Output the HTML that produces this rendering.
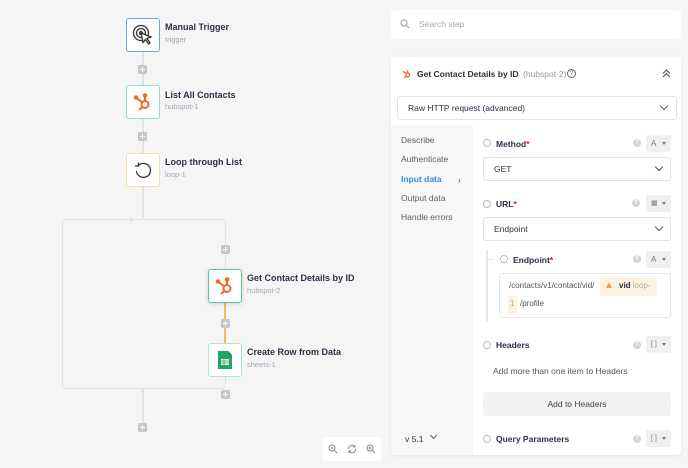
<!DOCTYPE html>
<html><head><style>
*{box-sizing:border-box;margin:0;padding:0}
body{width:688px;height:468px;background:#f5f5f5;font-family:"Liberation Sans",sans-serif;position:relative;overflow:hidden;color:#2d2f45}
.a{position:absolute}
.node{position:absolute;width:34px;height:34px;background:#fff;border:1.5px solid;border-radius:3px;display:flex;align-items:center;justify-content:center}
.t{position:absolute;font-size:9px;font-weight:bold;color:#2d2f45}
.s{position:absolute;font-size:7.5px;color:#a4a6b3}
.plus{position:absolute;width:9px;height:9px;background:#c4c6cf;border-radius:1.5px}
.plus:before{content:"";position:absolute;left:4px;top:2px;width:1px;height:5px;background:#fff}
.plus:after{content:"";position:absolute;left:2px;top:4px;width:5px;height:1px;background:#fff}
.ln{position:absolute;background:#e2e2e4}
.nav{position:absolute;left:401px;font-size:8.5px;color:#5a5c6b}
.lbl{position:absolute;font-size:8.5px;font-weight:bold;color:#2d2f45}
.radio{position:absolute;width:8px;height:8px;border:1px solid #b9bac2;border-radius:50%;background:#fff}
.q{position:absolute;width:8px;height:8px;border-radius:50%;background:#d4d5da;color:#fff;font-size:6px;text-align:center;line-height:8px;font-weight:bold}
.tb{position:absolute;width:25px;height:17px;background:#f0f0f2;border-radius:2px;font-size:8px;color:#777;padding-left:5px;line-height:17px}
.tb:after{content:"";position:absolute;right:5px;top:7px;border:2.5px solid transparent;border-top:3px solid #777}
.sel{position:absolute;background:#fff;border:1px solid #e3e3e7;border-radius:3px;font-size:8.5px;color:#2d2f45;padding-left:10px}
.chev{position:absolute;width:6px;height:6px;border-right:1.3px solid #555;border-bottom:1.3px solid #555;transform:rotate(45deg)}
</style></head><body>
<div class="ln" style="left:142px;top:52px;width:1.5px;height:166px"></div>
<div class="a" style="left:62px;top:219px;width:164px;height:170px;border:1.5px solid #e2e2e4;border-radius:4px"></div>
<div class="a" style="left:130px;top:217px;border:3px solid transparent;border-left:5px solid #e2e2e4"></div>
<div class="ln" style="left:142px;top:388px;width:1.5px;height:40px"></div>
<div class="a" style="left:224px;top:303px;width:2px;height:40px;background:#f6b95a"></div>

<div class="node" style="left:126px;top:18px;border-color:#6ea1e8">
<svg width="22" height="22" viewBox="0 0 22 22" fill="none" stroke="#333" stroke-width="1.3"><circle cx="9" cy="9" r="7.5"/><circle cx="9" cy="9" r="4.5"/><circle cx="9" cy="9" r="1.5"/><path d="M9 9 L19 13 L15 14.5 L18 19 L16.5 20 L13.5 15.5 L11 18.5 Z" fill="#fff"/></svg></div>
<div class="t" style="left:165px;top:22px">Manual Trigger</div><div class="s" style="left:165px;top:35px">trigger</div>
<div class="plus" style="left:138px;top:65px"></div>

<div class="node" style="left:126px;top:85px;border-color:#8ee0c2">
<svg width="20" height="20" viewBox="0 0 20 20" fill="none" stroke="#f2682c" stroke-width="2"><circle cx="12" cy="12.5" r="3.5"/><path d="M12 9V4M9.5 10.5L3.5 6M9.5 15L6 18"/><circle cx="12" cy="3.5" r="1.3" fill="#f2682c"/><circle cx="3" cy="5.5" r="1.3" fill="#f2682c"/></svg></div>
<div class="t" style="left:165px;top:90px">List All Contacts</div><div class="s" style="left:165px;top:102px">hubspot-1</div>
<div class="plus" style="left:138px;top:132px"></div>

<div class="node" style="left:126px;top:153px;border-color:#f7dcae">
<svg width="20" height="20" viewBox="0 0 20 20" fill="none" stroke="#333" stroke-width="1.3"><path d="M5 6A7 7 0 1 1 3.5 11"/><path d="M2 6H5.5V2.5"/></svg></div>
<div class="t" style="left:165px;top:157px">Loop through List</div><div class="s" style="left:165px;top:170px">loop-1</div>

<div class="plus" style="left:221px;top:245px"></div>
<div class="node" style="left:208px;top:269px;border-color:#4fcf98;box-shadow:0 1px 5px rgba(0,0,0,.15)">
<svg width="20" height="20" viewBox="0 0 20 20" fill="none" stroke="#f2682c" stroke-width="2"><circle cx="12" cy="12.5" r="3.5"/><path d="M12 9V4M9.5 10.5L3.5 6M9.5 15L6 18"/><circle cx="12" cy="3.5" r="1.3" fill="#f2682c"/><circle cx="3" cy="5.5" r="1.3" fill="#f2682c"/></svg></div>
<div class="t" style="left:247px;top:273px">Get Contact Details by ID</div><div class="s" style="left:247px;top:286px">hubspot-2</div>
<div class="plus" style="left:221px;top:319px"></div>
<div class="node" style="left:208px;top:343px;border-color:#a8e8cc">
<svg width="16" height="20" viewBox="0 0 16 20"><path d="M1 1H11L15 5V19H1Z" fill="#1fa463"/><path d="M11 1V5H15" fill="#138a50"/><rect x="4" y="9" width="8" height="6" fill="#fff"/><path d="M4 11H12M4 13H12M7 9V15" stroke="#1fa463" stroke-width=".8"/></svg></div>
<div class="t" style="left:247px;top:347px">Create Row from Data</div><div class="s" style="left:247px;top:360px">sheets-1</div>
<div class="plus" style="left:221px;top:390px"></div>
<div class="plus" style="left:138px;top:423px"></div>

<div class="a" style="left:323px;top:437px;width:58px;height:24px;background:#fff;border-radius:2px;font-size:10px;color:#888;display:flex;justify-content:space-around;align-items:center">
<svg width="10" height="10" viewBox="0 0 10 10" fill="none" stroke="#888"><circle cx="4" cy="4" r="3"/><path d="M6.5 6.5L9 9M2.5 4H5.5"/></svg>
<svg width="10" height="10" viewBox="0 0 10 10" fill="none" stroke="#888"><path d="M1.5 5A3.5 3.5 0 0 1 8 3M8.5 5A3.5 3.5 0 0 1 2 7M8 1V3H6M2 9V7H4"/></svg>
<svg width="10" height="10" viewBox="0 0 10 10" fill="none" stroke="#888"><circle cx="4" cy="4" r="3"/><path d="M6.5 6.5L9 9M2.5 4H5.5M4 2.5V5.5"/></svg></div>

<div class="a" style="left:391px;top:10px;width:290px;height:29px;background:#fff;border-radius:4px"></div>
<svg class="a" style="left:400px;top:19px" width="10" height="10" viewBox="0 0 10 10" fill="none" stroke="#999"><circle cx="4" cy="4" r="3"/><path d="M6.5 6.5L9 9"/></svg>
<div class="a" style="left:419px;top:19px;font-size:8.5px;color:#a4a6b3">Search step</div>

<div class="a" style="left:391px;top:57px;width:290px;height:398px;background:#fff;border-radius:4px;box-shadow:0 1px 3px rgba(0,0,0,.06)"></div>
<div class="a" style="left:391px;top:125px;width:82px;height:330px;background:#f7f7f8;border-bottom-left-radius:4px"></div>
<svg class="a" style="left:401px;top:68px" width="11" height="11" viewBox="0 0 20 20" fill="none" stroke="#f2682c" stroke-width="2.4"><circle cx="12" cy="12.5" r="3.5"/><path d="M12 9V4M9.5 10.5L3.5 6M9.5 15L6 18"/></svg>
<div class="lbl" style="left:417px;top:69px">Get Contact Details by ID</div>
<div class="a" style="left:523px;top:69px;font-size:8.5px;color:#999">(hubspot-2)</div>
<div class="a" style="left:567px;top:69px;width:9px;height:9px;border:1px solid #666;border-radius:50%;font-size:6.5px;text-align:center;line-height:8px;color:#666">?</div>
<svg class="a" style="left:662px;top:69px" width="9" height="9" viewBox="0 0 9 9" fill="none" stroke="#555" stroke-width="1.2"><path d="M1 4.5L4.5 1L8 4.5M1 8L4.5 4.5L8 8"/></svg>
<div class="sel" style="left:397px;top:96px;width:280px;height:24px;line-height:22px">Raw HTTP request (advanced)</div>
<div class="chev" style="left:661px;top:103px"></div>

<div class="nav" style="top:135px">Describe</div>
<div class="nav" style="top:154px">Authenticate</div>
<div class="nav" style="top:174px;color:#2e8ae6;font-weight:bold">Input data</div>
<div class="a" style="left:458px;top:176px;font-size:8px;color:#2e8ae6;font-weight:bold">›</div>
<div class="nav" style="top:193px">Output data</div>
<div class="nav" style="top:212px">Handle errors</div>
<div class="nav" style="left:405px;top:434px;color:#2d2f45">v 5.1</div>
<div class="chev" style="left:431px;top:433px;width:5px;height:5px"></div>

<div class="radio" style="left:483px;top:139px"></div>
<div class="lbl" style="left:496px;top:139px">Method<span style="color:#e03">*</span></div>
<div class="q" style="left:633px;top:139px">?</div>
<div class="tb" style="left:646px;top:135px">A</div>
<div class="sel" style="left:483px;top:157px;width:188px;height:24px;line-height:22px">GET</div>
<div class="chev" style="left:656px;top:164px"></div>

<div class="radio" style="left:483px;top:200px"></div>
<div class="lbl" style="left:496px;top:199px">URL<span style="color:#e03">*</span></div>
<div class="q" style="left:632px;top:199px">?</div>
<div class="tb" style="left:646px;top:195px;font-size:7px">▦</div>
<div class="sel" style="left:483px;top:217px;width:188px;height:24px;line-height:22px">Endpoint</div>
<div class="chev" style="left:656px;top:224px"></div>

<div class="a" style="left:486px;top:250px;width:1.5px;height:72px;background:#e6e6ea"></div>
<div class="a" style="left:488px;top:259px;width:6px;height:1px;background:#e6e6ea"></div>
<div class="radio" style="left:500px;top:255px"></div>
<div class="lbl" style="left:513px;top:255px">Endpoint<span style="color:#e03">*</span></div>
<div class="q" style="left:633px;top:255px">?</div>
<div class="tb" style="left:646px;top:251px">A</div>
<div class="a" style="left:499px;top:273px;width:172px;height:45px;border:1px solid #e6e6ea;border-radius:3px"></div>
<div class="a" style="left:509px;top:281px;font-size:8px;color:#555">/contacts/v1/contact/vid/</div>
<div class="a" style="left:600px;top:277px;width:57px;height:19px;background:#fdf1e3;border-radius:2px"></div>
<div class="a" style="left:604px;top:280px;font-size:10px;color:#f0a030">▲</div>
<div class="a" style="left:619px;top:281px;font-size:8px;font-weight:bold;color:#2d2f45">vid <span style="font-weight:normal;color:#b9a99a">loop-</span></div>
<div class="a" style="left:508px;top:296px;width:9px;height:17px;background:#fdf1e3"></div>
<div class="a" style="left:510px;top:299px;font-size:8px;color:#b9a99a">1</div>
<div class="a" style="left:520px;top:299px;font-size:8px;color:#555">/profile</div>

<div class="radio" style="left:483px;top:341px"></div>
<div class="lbl" style="left:496px;top:340px">Headers</div>
<div class="q" style="left:633px;top:341px">?</div>
<div class="tb" style="left:646px;top:336px;font-size:7px">[ ]</div>
<div class="a" style="left:493px;top:366px;font-size:8.5px;color:#555">Add more than one item to Headers</div>
<div class="a" style="left:483px;top:392px;width:188px;height:24px;background:#f2f2f4;border-radius:3px;font-size:8.5px;color:#444;text-align:center;line-height:24px">Add to Headers</div>
<div class="radio" style="left:483px;top:435px"></div>
<div class="lbl" style="left:496px;top:434px">Query Parameters</div>
<div class="q" style="left:633px;top:435px">?</div>
<div class="tb" style="left:646px;top:430px;font-size:7px">[ ]</div>
</body></html>
